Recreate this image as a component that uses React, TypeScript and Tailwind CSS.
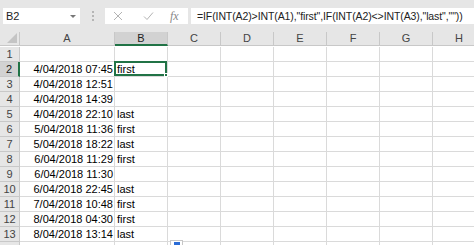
const rows: [string, string][] = [
  ["", ""],
  ["4/04/2018 07:45", "first"],
  ["4/04/2018 12:51", ""],
  ["4/04/2018 14:39", ""],
  ["4/04/2018 22:10", "last"],
  ["5/04/2018 11:36", "first"],
  ["5/04/2018 18:22", "last"],
  ["6/04/2018 11:29", "first"],
  ["6/04/2018 11:30", ""],
  ["6/04/2018 22:45", "last"],
  ["7/04/2018 10:48", "first"],
  ["8/04/2018 04:30", "first"],
  ["8/04/2018 13:14", "last"],
  ["", ""],
];

const cols = ["A", "B", "C", "D", "E", "F", "G", "H"];

export default function App() {
  return (
    <div className="w-[474px] h-[245px] overflow-hidden bg-white text-[11px] leading-none text-black font-['Liberation_Sans',Arial,sans-serif]">
      {/* Formula bar */}
      <div className="h-8 bg-[#e6e6e6] flex items-start pt-2">
        <div className="ml-[3px] w-[77px] h-4 bg-white flex items-center justify-between pl-[3px] pr-[4px] text-[#222]">
          <span>B2</span>
          <span className="w-0 h-0 border-l-[3px] border-r-[3px] border-t-[3px] border-l-transparent border-r-transparent border-t-[#777]" />
        </div>
        <div className="w-[25px] h-4 flex flex-col items-center justify-center gap-[2px]">
          <span className="w-[2px] h-[2px] bg-[#b5b5b5]" />
          <span className="w-[2px] h-[2px] bg-[#b5b5b5]" />
          <span className="w-[2px] h-[2px] bg-[#b5b5b5]" />
        </div>
        <div className="w-[83px] h-4 bg-white flex items-center pl-[8px]">
          <svg width="10" height="10" viewBox="0 0 10 10">
            <path d="M1 1 L9 9 M9 1 L1 9" stroke="#b3b3b3" strokeWidth="1" />
          </svg>
          <svg width="11" height="10" viewBox="0 0 11 10" className="ml-[20px]">
            <path d="M1 5.5 L4 8.5 L10 1.5" stroke="#b3b3b3" strokeWidth="1" fill="none" />
          </svg>
          <span className="ml-[16px] italic text-[12px] text-[#888] font-['Liberation_Serif',serif]">fx</span>
        </div>
        <div className="ml-[3px] flex-1 h-4 bg-white flex items-center pl-[6px] whitespace-nowrap text-[10.5px] tracking-[-0.1px] text-[#222]">
          =IF(INT(A2)&gt;INT(A1),"first",IF(INT(A2)&lt;&gt;INT(A3),"last",""))
        </div>
      </div>

      {/* Sheet grid */}
      <div className="relative grid grid-cols-[20px_95px_53px_53px_53px_53px_53px_53px_53px] auto-rows-[15px]">
        <div className="h-[14px] bg-[#e6e6e6] border-r border-b border-[#c8c8c8] flex items-end justify-end pr-[2px] pb-[2px]">
          <svg width="10" height="10" viewBox="0 0 10 10">
            <path d="M10 0 L10 10 L0 10 Z" fill="#c4c4c4" />
          </svg>
        </div>
        {cols.map((c) => (
          <div
            key={c}
            className={
              c === "B"
                ? "h-[14px] bg-[#d2d2d2] border-r border-[#c8c8c8] border-b-2 border-b-[#217346] flex items-center justify-center text-[#222]"
                : "h-[14px] bg-[#e6e6e6] border-r border-b border-[#c8c8c8] flex items-center justify-center text-[#444]"
            }
          >
            {c}
          </div>
        ))}

        {rows.map(([a, b], i) => {
          const n = i + 1;
          const sel = n === 2;
          return [
            <div
              key={`r${n}`}
              className={
                sel
                  ? "bg-[#d2d2d2] border-r-2 border-r-[#217346] border-b border-b-[#c8c8c8] flex items-center justify-center text-[#222]"
                  : "bg-[#e6e6e6] border-r border-b border-[#c8c8c8] flex items-center justify-center text-[#444]"
              }
            >
              {n}
            </div>,
            <div key={`a${n}`} className="border-r border-b border-[#dadada] flex items-center justify-end pr-[1px] whitespace-nowrap">
              {a}
            </div>,
            <div key={`b${n}`} className="relative border-r border-b border-[#dadada] flex items-center pl-[2px] whitespace-nowrap">
              {b}
              {sel && (
                <span className="absolute -left-[1px] -top-[1px] right-0 bottom-0 border-2 border-[#217346]">
                  <span className="absolute -right-[3px] -bottom-[3px] w-[4px] h-[4px] bg-[#217346] border border-white" />
                </span>
              )}
            </div>,
            ...["C", "D", "E", "F", "G", "H"].map((c) => (
              <div key={`${c}${n}`} className="border-r border-b border-[#dadada]" />
            )),
          ];
        })}

        {/* autofill options button */}
        <div className="absolute left-[170px] top-[208px] w-[13px] h-[10px] bg-white border border-[#c6c6c6] flex items-start justify-center pt-[1px]">
          <span className="w-[6px] h-[6px] bg-[#2b6cd6]" />
        </div>
      </div>
    </div>
  );
}
